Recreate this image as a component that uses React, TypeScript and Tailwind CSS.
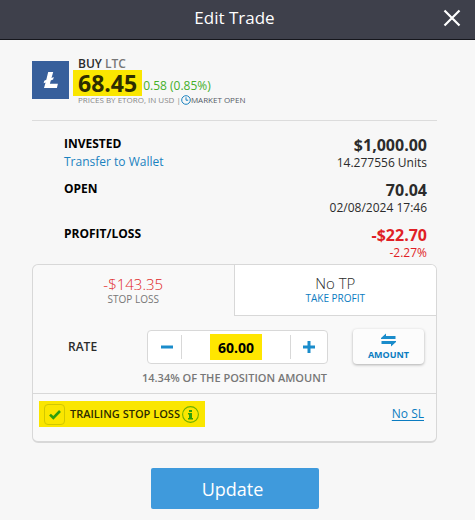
import React, { useState } from "react";

export default function EditTrade() {
  const [trailing, setTrailing] = useState(true);
  const [rate, setRate] = useState("60.00");

  const step = (delta: number) =>
    setRate((value) => ((parseFloat(value) || 0) + delta).toFixed(2));

  return (
    <div className="min-h-screen bg-[#f7f7f7] font-['Open_Sans',sans-serif] text-[#2b2b2b]">
      {/* Header */}
      <header className="grid h-10 grid-cols-[1fr_auto_1fr] items-center border-b border-[#15161c] bg-[#3e404b] px-3 text-white">
        <h1 className="col-start-2 pr-[6px] pb-1 text-[17px] leading-6">Edit Trade</h1>
        <button aria-label="Close" className="mb-1 justify-self-end">
          <svg className="size-[22px]" viewBox="0 0 22 22" fill="none">
            <path d="M3.5 3.5l15 15M18.5 3.5l-15 15" stroke="currentColor" strokeWidth="2.2" />
          </svg>
        </button>
      </header>

      <main className="pr-[38px] pl-8">
        {/* Instrument */}
        <section className="flex gap-1 border-b border-[#dcdcdc] pt-[17px] pb-4">
          <LitecoinLogo />
          <div>
            <p className="pl-[5px] text-xs leading-[13px] font-semibold">
              BUY <span className="text-[#777]">LTC</span>
            </p>
            <p className="flex items-end gap-px">
              <span className="bg-[#fae600] px-[5px] text-[23px] leading-[26px] font-bold text-[#2d2d00]">
                68.45
              </span>
              <span className="text-xs leading-5 text-[#44b02a]">0.58 (0.85%)</span>
            </p>
            <p className="flex h-2 items-center pl-[5px] text-[8px] leading-2 text-[#888]">
              PRICES BY ETORO, IN USD |
              <svg className="size-[10px]" viewBox="0 0 10 10" fill="none" stroke="#1a82c0">
                <circle cx="5" cy="5" r="4.3" />
                <path d="M5 2.3V5.2H7.2" />
              </svg>
              <span className="text-[#555a66]">MARKET OPEN</span>
            </p>
          </div>
        </section>

        {/* Position summary */}
        <dl className="space-y-[9px] pt-[14px] pr-[10px] pl-8 pb-[3px]">
          <SummaryRow
            label="INVESTED"
            value="$1,000.00"
            detail="14.277556 Units"
            link="Transfer to Wallet"
          />
          <SummaryRow label="OPEN" value="70.04" detail="02/08/2024 17:46" />
          <SummaryRow label="PROFIT/LOSS" value="-$22.70" detail="-2.27%" negative />
        </dl>

        {/* Stop loss / take profit */}
        <section className="overflow-hidden rounded-md border border-b-2 border-[#d8d8d8] bg-[#f9f9f9]">
          <div className="grid grid-cols-2">
            <button className="h-[51px] border-r border-[#d8d8d8] pb-[2px] text-center">
              <span className="block text-[15px] leading-[18px] font-light text-[#e01f26]">-$143.35</span>
              <span className="block text-[10px] leading-3 text-[#777]">STOP LOSS</span>
            </button>
            <button className="h-[51px] border-b border-[#d8d8d8] bg-white pb-[2px] text-center">
              <span className="block text-[15px] leading-[18px] font-light">No TP</span>
              <span className="block text-[10px] leading-3 text-[#0b7cc1]">TAKE PROFIT</span>
            </button>
          </div>

          <div className="flex items-end pt-[13px] pr-3 pl-[35px]">
            <label htmlFor="rate" className="flex-1 text-xs leading-[34px] font-semibold">
              RATE
            </label>
            <div className="flex h-[34px] w-[181px] items-center rounded-sm border border-[#d8d8d8] bg-white text-[#1a8ccb]">
              <button
                aria-label="Decrease rate"
                onClick={() => step(-1)}
                className="flex h-6 w-[33px] items-center justify-center pl-1"
              >
                <svg className="size-3" viewBox="0 0 12 12" fill="currentColor">
                  <path d="M0 4.5h12v3H0z" />
                </svg>
              </button>
              <div className="flex h-6 w-[110px] items-center justify-center border-x border-[#d8d8d8]">
                <input
                  id="rate"
                  value={rate}
                  onChange={(e) => setRate(e.target.value)}
                  className="h-[26px] w-[52px] bg-[#ffe600] text-center text-sm font-bold text-black outline-none"
                />
              </div>
              <button
                aria-label="Increase rate"
                onClick={() => step(1)}
                className="flex h-6 flex-1 items-center justify-center"
              >
                <svg className="size-3" viewBox="0 0 12 12" fill="currentColor">
                  <path d="M4.5 0h3v4.5H12v3H7.5V12h-3V7.5H0v-3h4.5z" />
                </svg>
              </button>
            </div>
            <button className="ml-[25px] flex h-[35px] w-[71px] flex-col items-center rounded-sm bg-[#fcfcfc] pt-1 text-[#0b7cc1] shadow-[0_1px_3px_rgba(0,0,0,0.3)]">
              <svg className="h-[14px] w-[15px]" viewBox="0 0 15 14" fill="#1a8ccb">
                <path d="M0 6V5L5 0.5V3H14.5V6zM15 8V9L10 13.5V11H0.5V8z" />
              </svg>
              <span className="text-[9px] leading-[15px] font-bold">AMOUNT</span>
            </button>
          </div>
          <p className="pt-[6px] pb-[7px] text-center text-[11px] leading-4 font-semibold text-[#777]">
            14.34% OF THE POSITION AMOUNT
          </p>

          <div className="flex items-start justify-between border-t border-[#d8d8d8] pt-[7px] pr-3 pb-[14px] pl-[6px]">
            <div className="flex h-[26px] items-center bg-[#fae600] pr-[6px] pl-[5px] text-[#2d2d00]">
              <label className="flex items-center gap-[5px] text-[11px] font-semibold">
                <span className="relative flex size-[21px]">
                  <input
                    type="checkbox"
                    checked={trailing}
                    onChange={(e) => setTrailing(e.target.checked)}
                    className="size-full appearance-none rounded-sm border border-[#d2c800]"
                  />
                  {trailing && (
                    <svg
                      className="pointer-events-none absolute top-[5px] left-[5px] size-3"
                      viewBox="0 0 12 12"
                      fill="none"
                    >
                      <path d="M1 5.6L4.3 8.8L11 2" stroke="#2f9e0c" strokeWidth="2.6" />
                    </svg>
                  )}
                </span>
                TRAILING STOP LOSS
              </label>
              <button aria-label="About trailing stop loss" className="ml-[2px]">
                <svg className="size-[17px]" viewBox="0 0 17 17" fill="none">
                  <circle cx="8.5" cy="8.5" r="7.9" stroke="#6fb000" strokeWidth="1.1" />
                  <path d="M7 4h3v2H7zM6 7h4v5h1v1.4H6V12h1V8.4H6z" fill="#2f9e0c" />
                </svg>
              </button>
            </div>
            <a href="#" className="pt-[5px] text-xs leading-4 text-[#0b7cc1] underline underline-offset-2">
              No SL
            </a>
          </div>
        </section>

        <button className="mx-auto mt-[25px] block h-[41px] w-[168px] rounded-xs bg-[#3f9adc] pr-1 text-lg text-white">
          Update
        </button>
      </main>
    </div>
  );
}

function SummaryRow({
  label,
  value,
  detail,
  link,
  negative,
}: {
  label: string;
  value: string;
  detail: string;
  link?: string;
  negative?: boolean;
}) {
  return (
    <div className="flex justify-between">
      <dt className="text-xs leading-[18px] font-bold text-black">
        {label}
        {link && (
          <a href="#" className="block font-normal text-[#1a82c0]">
            {link}
          </a>
        )}
      </dt>
      <dd className={`text-right ${negative ? "text-[#e01f26]" : ""}`}>
        <span className="block text-base leading-5 font-bold">{value}</span>
        <span className="block text-xs leading-4">{detail}</span>
      </dd>
    </div>
  );
}

function LitecoinLogo() {
  return (
    <svg className="mt-1 h-[38px] w-[37px]" viewBox="0 0 37 38">
      <path d="M0 0h37v38H0z" fill="#375f9b" />
      <path
        d="M16.2 11h5l-1.7 6 2.3-1-.7 2.5-2.3 1-.9 3.3h8l-1 4.2H12l1.6-5.6-2 .8.7-2.5 2-.9z"
        fill="#fff"
      />
    </svg>
  );
}
